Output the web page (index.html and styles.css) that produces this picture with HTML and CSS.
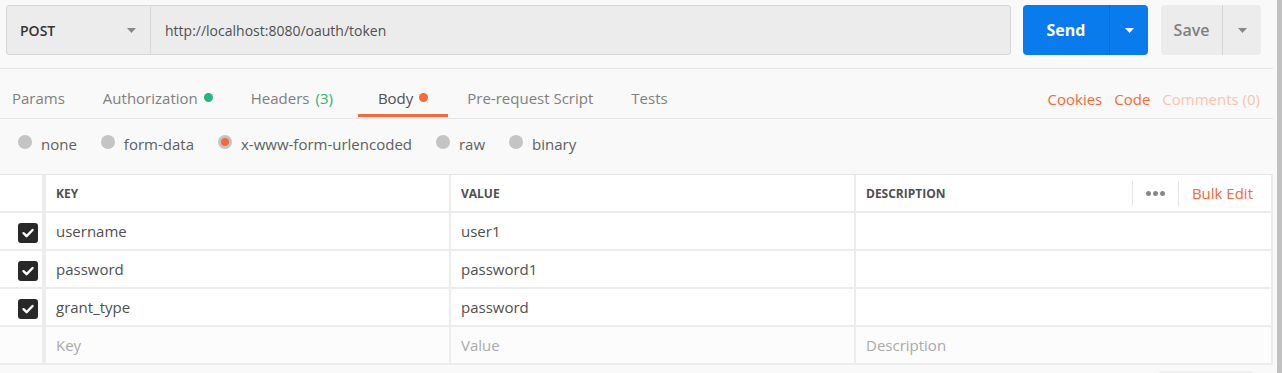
FILE: index.html
```html
<!DOCTYPE html>
<html>
<head>
    <title>Request</title>
    <link rel="stylesheet" href="styles.css">
</head>
<body>
<div class="app">
    <div class="main">
        <div class="request-bar">
            <div class="url-group">
                <div class="method">
                    <span>POST</span>
                    <svg class="caret" width="9" height="5" viewBox="0 0 9 5"><path d="M0 0 L9 0 L4.5 5 Z" fill="#888"/></svg>
                </div>
                <div class="url">http://localhost:8080/oauth/token</div>
            </div>
            <div class="btn-send">
                <span class="btn-main">Send</span>
                <span class="btn-arrow"><svg width="9" height="5" viewBox="0 0 9 5"><path d="M0 0 L9 0 L4.5 5 Z" fill="#fff"/></svg></span>
            </div>
            <div class="btn-save">
                <span class="btn-main">Save</span>
                <span class="btn-arrow"><svg width="9" height="5" viewBox="0 0 9 5"><path d="M0 0 L9 0 L4.5 5 Z" fill="#888"/></svg></span>
            </div>
        </div>

        <div class="tabs">
            <div class="tab first">Params</div>
            <div class="tab">Authorization<span class="dot green"></span></div>
            <div class="tab">Headers<span class="count">(3)</span></div>
            <div class="tab active">Body<span class="dot orange"></span></div>
            <div class="tab">Pre-request Script</div>
            <div class="tab">Tests</div>
            <div class="tab-links">
                <span class="link">Cookies</span>
                <span class="link">Code</span>
                <span class="link faded">Comments (0)</span>
            </div>
        </div>

        <div class="body-types">
            <label class="radio"><span class="circle"></span>none</label>
            <label class="radio"><span class="circle"></span>form-data</label>
            <label class="radio"><span class="circle selected"></span>x-www-form-urlencoded</label>
            <label class="radio"><span class="circle"></span>raw</label>
            <label class="radio"><span class="circle"></span>binary</label>
        </div>

        <table class="kv">
            <colgroup>
                <col class="col-check">
                <col class="col-key">
                <col class="col-value">
                <col>
            </colgroup>
            <tr class="head">
                <td></td>
                <td>KEY</td>
                <td>VALUE</td>
                <td>
                    <div class="desc-head">
                        <span>DESCRIPTION</span>
                        <div class="head-actions">
                            <span class="sep"></span>
                            <span class="more"><i></i><i></i><i></i></span>
                            <span class="sep"></span>
                            <span class="bulk">Bulk Edit</span>
                        </div>
                    </div>
                </td>
            </tr>
            <tr>
                <td><span class="check"><svg width="20" height="20" viewBox="0 0 20 20"><path d="M5.5 10.2 L8.6 13.2 L14.6 7" fill="none" stroke="#fff" stroke-width="2.4" stroke-linecap="round" stroke-linejoin="round"/></svg></span></td>
                <td>username</td>
                <td>user1</td>
                <td></td>
            </tr>
            <tr>
                <td><span class="check"><svg width="20" height="20" viewBox="0 0 20 20"><path d="M5.5 10.2 L8.6 13.2 L14.6 7" fill="none" stroke="#fff" stroke-width="2.4" stroke-linecap="round" stroke-linejoin="round"/></svg></span></td>
                <td>password</td>
                <td>password1</td>
                <td></td>
            </tr>
            <tr>
                <td><span class="check"><svg width="20" height="20" viewBox="0 0 20 20"><path d="M5.5 10.2 L8.6 13.2 L14.6 7" fill="none" stroke="#fff" stroke-width="2.4" stroke-linecap="round" stroke-linejoin="round"/></svg></span></td>
                <td>grant_type</td>
                <td>password</td>
                <td></td>
            </tr>
            <tr class="placeholder">
                <td></td>
                <td>Key</td>
                <td>Value</td>
                <td>Description</td>
            </tr>
        </table>
        <div class="below">
            <div class="ghost-btn"></div>
        </div>
    </div>
    <div class="scrollbar"></div>
</div>
</body>
</html>
```

FILE: styles.css
```css
body {
    margin: 0;
    background: #f9f9f9;
    font-family: "Open Sans", "Liberation Sans", sans-serif;
    color: #505050;
    overflow: hidden;
}
.app {
    display: flex;
    height: 100vh;
}
.main {
    width: 1273px;
    flex: none;
}
.scrollbar {
    width: 5px;
    margin-left: 4px;
    background: #c1c1c1;
}

/* request bar */
.request-bar {
    display: flex;
    padding: 5px 0 0 6px;
    height: 63px;
    border-bottom: 1px solid #e6e6e6;
}
.url-group {
    display: flex;
    width: 1005px;
    height: 50px;
    box-sizing: border-box;
    border: 1px solid #d6d6d6;
    border-radius: 3px;
    background: #ececec;
}
.method {
    width: 144px;
    box-sizing: border-box;
    border-right: 1px solid #d9d9d9;
    display: flex;
    align-items: center;
    justify-content: space-between;
    padding: 0 14px 0 13px;
    font-size: 14px;
    font-weight: 600;
    color: #333;
}
.url {
    display: flex;
    align-items: center;
    padding-left: 14px;
    font-size: 14px;
    color: #505050;
}
.btn-send,
.btn-save {
    display: flex;
    height: 50px;
    border-radius: 4px;
    font-size: 16px;
    font-weight: 700;
}
.btn-send {
    margin-left: 12px;
    width: 125px;
    background: #097bed;
    color: #fff;
}
.btn-save {
    margin-left: 13px;
    width: 100px;
    background: #ececec;
    color: #808080;
    font-weight: 600;
}
.btn-main {
    display: flex;
    align-items: center;
    justify-content: center;
    flex: 1;
}
.btn-arrow {
    display: flex;
    align-items: center;
    justify-content: center;
    width: 38px;
    border-left: 1px solid #0466d3;
}
.btn-save .btn-arrow {
    width: 38px;
    border-left-color: #d6d6d6;
}

/* tabs */
.tabs {
    display: flex;
    height: 49px;
    border-bottom: 1px solid #e6e6e6;
    padding-right: 13px;
}
.tab {
    display: flex;
    align-items: flex-end;
    box-sizing: border-box;
    height: 48px;
    padding: 0 19px 6px;
    border-bottom: 3px solid transparent;
    font-size: 15px;
    line-height: 20px;
    color: #808080;
    white-space: nowrap;
}
.tab.first {
    padding-left: 12px;
}
.tab.active {
    color: #505050;
    border-bottom-color: #f26b3a;
    margin-left: 6px;
    padding: 0 20px 6px;
}
.dot {
    display: inline-block;
    width: 9px;
    height: 9px;
    border-radius: 50%;
    margin-left: 6px;
    margin-bottom: 6px;
}
.dot.green {
    background: #26b47f;
}
.dot.orange {
    background: #f26b3a;
}
.count {
    color: #26b47f;
    margin-left: 6px;
}
.tab-links {
    margin-left: auto;
    display: flex;
    align-items: flex-end;
    gap: 12px;
    padding-bottom: 9px;
    font-size: 15px;
    line-height: 20px;
}
.link {
    color: #f26b3a;
}
.link.faded {
    color: #f8c4b0;
}

/* body type radios */
.body-types {
    display: flex;
    align-items: center;
    height: 49px;
    padding: 0 0 6px 18px;
    gap: 24px;
    border-bottom: 1px solid #e6e6e6;
}
.radio {
    display: flex;
    align-items: center;
    font-size: 15px;
    color: #606060;
}
.circle {
    width: 14px;
    height: 14px;
    box-sizing: border-box;
    border-radius: 50%;
    background: #c4c4c4;
    margin-right: 9px;
    margin-top: -3px;
}
.circle.selected {
    border: 3px solid #c4c4c4;
    background: #f26b3a;
}

/* key / value table */
.kv {
    width: 1273px;
    border-collapse: collapse;
    table-layout: fixed;
    background: #fff;
    font-size: 15px;
}
.col-check {
    width: 44px;
}
.col-key {
    width: 406px;
}
.col-value {
    width: 405px;
}
.kv td {
    height: 36px;
    padding: 0 10px;
    border: 2px solid #ececec;
    color: #505050;
    white-space: nowrap;
}
.kv td:first-child {
    border-left: none;
    border-right-width: 4px;
    padding: 0 0 0 18px;
}
.kv tr:first-child td {
    border-top: none;
}
.kv .head td {
    font-size: 12px;
    font-weight: 700;
    color: #505050;
}
.desc-head {
    display: flex;
    align-items: center;
}
.head-actions {
    margin-left: auto;
    display: flex;
    align-items: center;
    font-weight: 400;
}
.sep {
    width: 1px;
    height: 25px;
    background: #e6e6e6;
}
.more {
    display: flex;
    gap: 2px;
    padding: 0 13px;
}
.more i {
    width: 5px;
    height: 5px;
    border-radius: 50%;
    background: #888;
}
.bulk {
    font-size: 15px;
    color: #f26b3a;
    padding: 0 8px 0 13px;
}
.check {
    display: block;
    width: 20px;
    height: 20px;
    margin-top: 3px;
    border-radius: 3px;
    background: #282828;
}
.check svg {
    display: block;
}
.kv .placeholder td {
    background: #fcfcfc;
    color: #aaa;
}

.below {
    display: flex;
    justify-content: flex-end;
    padding: 6px 20px 0 0;
}
.ghost-btn {
    width: 95px;
    height: 20px;
    border-radius: 4px;
    background: #efefef;
}
```
